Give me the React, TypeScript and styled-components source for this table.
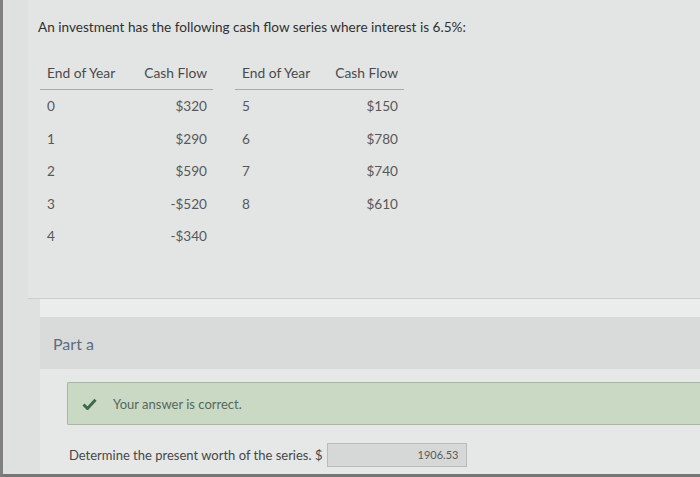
import React from "react";
import styled, { createGlobalStyle } from "styled-components";

const Global = createGlobalStyle`
  html, body { margin: 0; padding: 0; }
  body {
    background: #dedfdf;
    font-family: Lato, "Open Sans", "Liberation Sans", sans-serif;
    width: 700px;
    height: 477px;
    overflow: hidden;
  }
`;

const Page = styled.div`
  width: 700px;
  height: 477px;
  box-sizing: border-box;
  border-left: 3px solid #808080;
  border-bottom: 3px solid #767676;
  display: flex;
  flex-direction: column;
  background: #dfe0e0;
`;

const TopPanel = styled.section`
  margin-left: 25px;
  height: 299px;
  box-sizing: border-box;
  padding: 19px 0 0 10px;
  background: #e3e4e4;
  border-bottom: 1px solid #cdcece;
`;

const Title = styled.p`
  margin: 0;
  font-size: 13.6px;
  line-height: 16px;
  color: #303132;
`;

const Table = styled.div`
  display: flex;
  gap: 22px;
  margin: 21px 0 0 2px;
`;

const Group = styled.div<{ $w: number }>`
  width: ${(p) => p.$w}px;
  display: flex;
  flex-direction: column;
`;

const HeadRow = styled.div`
  display: flex;
  justify-content: space-between;
  height: 33px;
  line-height: 34px;
  padding: 0 6px 0 7px;
  border-bottom: 1px solid #a9aaab;
  font-size: 13.8px;
  color: #4a4b4c;
`;

const Row = styled.div`
  display: flex;
  justify-content: space-between;
  height: 32.5px;
  line-height: 32.5px;
  padding: 0 6px 0 7px;
  font-size: 13.6px;
  color: #57585a;
  &:first-of-type {
    margin-top: 3.5px;
  }
`;

const Lower = styled.section`
  flex: 1;
  display: flex;
  flex-direction: column;
  margin-left: 37px;
  padding-top: 18px;
  background: linear-gradient(#ebecec 0, #ebecec 18px, #e6e7e7 18px);
`;

const PartHeader = styled.div`
  height: 52px;
  display: flex;
  align-items: center;
  padding-left: 13px;
  background: #d9dada;
  font-size: 16px;
  color: #5d6c80;
`;

const Body = styled.div`
  padding: 13px 0 0 27px;
  display: flex;
  flex-direction: column;
`;

const Correct = styled.div`
  height: 43px;
  box-sizing: border-box;
  display: flex;
  align-items: center;
  gap: 16px;
  padding-left: 14px;
  background: #cad9c4;
  border: 1px solid #a7b7a1;
  border-right: none;
  border-radius: 2px 0 0 2px;
  font-size: 13px;
  color: #56685c;
`;

const Question = styled.div`
  margin-top: 18px;
  display: flex;
  align-items: center;
  gap: 5px;
  padding-left: 2px;
  font-size: 13px;
  color: #474849;
`;

const Answer = styled.div`
  width: 140px;
  height: 24px;
  box-sizing: border-box;
  background: #d6d7d7;
  border: 1px solid #b9baba;
  text-align: right;
  padding-right: 8px;
  line-height: 22px;
  font-size: 11px;
  color: #5a5b5c;
`;

const left = [
  ["0", "$320"],
  ["1", "$290"],
  ["2", "$590"],
  ["3", "-$520"],
  ["4", "-$340"],
];
const right = [
  ["5", "$150"],
  ["6", "$780"],
  ["7", "$740"],
  ["8", "$610"],
];

const Check = () => (
  <svg width="15" height="12" viewBox="0 0 15 12">
    <path d="M1.5 6.5 L5.5 10.5 L13.5 1.8" fill="none" stroke="#3e6a4b" strokeWidth="3" strokeLinejoin="miter" />
  </svg>
);

export default function App() {
  return (
    <>
      <Global />
      <Page>
        <TopPanel>
          <Title>An investment has the following cash flow series where interest is 6.5%:</Title>
          <Table>
            <Group $w={173}>
              <HeadRow>
                <span>End of Year</span>
                <span>Cash Flow</span>
              </HeadRow>
              {left.map(([y, c]) => (
                <Row key={y}>
                  <span>{y}</span>
                  <span>{c}</span>
                </Row>
              ))}
            </Group>
            <Group $w={169}>
              <HeadRow>
                <span>End of Year</span>
                <span>Cash Flow</span>
              </HeadRow>
              {right.map(([y, c]) => (
                <Row key={y}>
                  <span>{y}</span>
                  <span>{c}</span>
                </Row>
              ))}
            </Group>
          </Table>
        </TopPanel>
        <Lower>
          <PartHeader>Part a</PartHeader>
          <Body>
            <Correct>
              <Check />
              <span>Your answer is correct.</span>
            </Correct>
            <Question>
              <span>Determine the present worth of the series. $</span>
              <Answer>1906.53</Answer>
            </Question>
          </Body>
        </Lower>
      </Page>
    </>
  );
}
